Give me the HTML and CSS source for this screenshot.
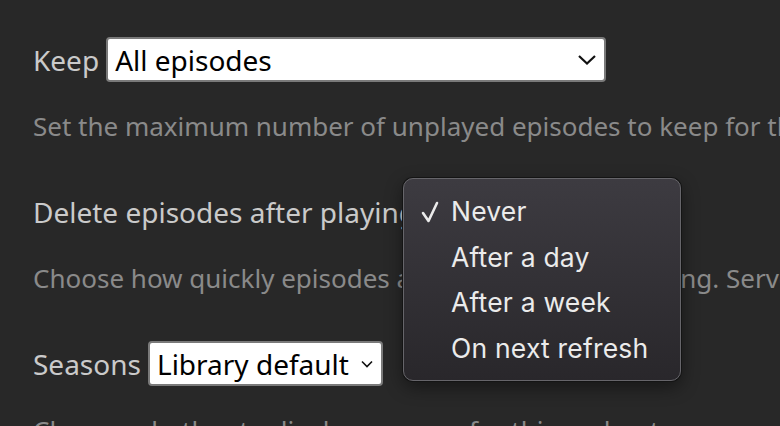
FILE: index.html
```html
<!DOCTYPE html>
<html>
<head>
<meta charset="utf-8">
<link rel="stylesheet" href="styles.css">
</head>
<body>
<div class="page">
  <div class="setting">
    <div class="row">
      <span class="label">Keep</span>
      <div class="select wide">
        <span class="value">All episodes</span>
        <svg class="chev" width="18" height="10" viewBox="0 0 18 10"><path d="M1 1 L9 8.5 L17 1" fill="none" stroke="#111" stroke-width="2.2"/></svg>
      </div>
    </div>
    <p class="desc">Set the maximum number of unplayed episodes to keep for this podcast.</p>
  </div>

  <div class="setting popup-host">
    <div class="row">
      <span class="label">Delete episodes after playing</span>
      <div class="select">
        <span class="value">Never</span>
        <svg class="chev" width="18" height="10" viewBox="0 0 18 10"><path d="M1 1 L9 8.5 L17 1" fill="none" stroke="#111" stroke-width="2.2"/></svg>
      </div>
    </div>
    <p class="desc">Choose how quickly episodes are removed after playing. Server admins can change this.</p>
    <div class="menu">
      <div class="item"><svg class="check" width="18" height="22" viewBox="0 0 18 22"><path d="M2 12 L7.5 20 L16 2" fill="none" stroke="#ebebeb" stroke-width="2.6" stroke-linecap="round" stroke-linejoin="round"/></svg>Never</div>
      <div class="item">After a day</div>
      <div class="item">After a week</div>
      <div class="item">On next refresh</div>
    </div>
  </div>

  <div class="setting">
    <div class="row">
      <span class="label">Seasons</span>
      <div class="select fit">
        <span class="value">Library default</span>
        <svg class="chev" width="12" height="8" viewBox="0 0 12 8"><path d="M1 1.5 L6 6.5 L11 1.5" fill="none" stroke="#111" stroke-width="1.6"/></svg>
      </div>
    </div>
    <p class="desc">Choose whether to display seasons for this podcast.</p>
  </div>
</div>
</body>
</html>
```

FILE: styles.css
```css
html, body {
  margin: 0;
  padding: 0;
  background: #282828;
  overflow: hidden;
}
.page {
  padding: 37px 0 0 33px;
  font-family: "Noto Sans", "Open Sans", sans-serif;
  font-size: 28px;
  white-space: nowrap;
}
.setting {
  margin-bottom: 45px;
}
.popup-host {
  position: relative;
}
.row {
  display: flex;
  align-items: center;
  gap: 7px;
  height: 45px;
}
.label {
  color: #cacaca;
}
.select {
  display: flex;
  align-items: center;
  justify-content: space-between;
  gap: 12px;
  box-sizing: border-box;
  height: 45px;
  padding: 0 8px 0 7px;
  background: #ffffff;
  border: 2px solid #7a7a7a;
  border-radius: 4px;
  color: #000;
}
.select.wide {
  width: 500px;
}
.select.fit {
  gap: 12px;
  padding-right: 8px;
}
.value {
  line-height: 40px;
}
.chev {
  display: block;
  flex: none;
}
.menu {
  position: absolute;
  top: -11px;
  left: 370px;
  width: 278px;
  box-sizing: border-box;
  padding: 10px 0 9px 0;
  border-radius: 10px;
  background: linear-gradient(to bottom, #3d3b41, #29272b);
  border: 1px solid #66656a;
  box-shadow: 0 0 0 1px #141414, 0 6px 18px rgba(0,0,0,0.45);
  font-family: Inter, "Noto Sans", sans-serif;
  font-size: 26.5px;
  letter-spacing: 0.2px;
  color: #ebebeb;
}
.item {
  position: relative;
  height: 45.6px;
  line-height: 45.6px;
  padding-left: 47px;
}
.check {
  position: absolute;
  left: 17px;
  top: 12px;
}
.desc {
  margin: 26px 0 0 0;
  font-size: 26px;
  line-height: 36px;
  color: #8a8a8a;
}
```
